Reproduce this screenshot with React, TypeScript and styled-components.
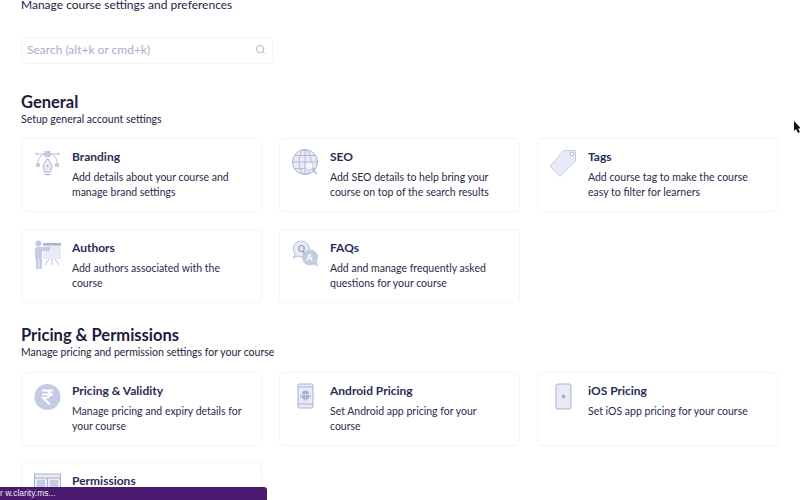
import React from 'react';
import styled, { createGlobalStyle } from 'styled-components';

const Global = createGlobalStyle`
  html, body {
    margin: 0;
    height: 500px;
    overflow: hidden;
    background: #fff;
    font-family: "Lato", "Liberation Sans", sans-serif;
    color: #20203f;
  }
`;

const Page = styled.div`
  width: 800px;
  height: 500px;
  box-sizing: border-box;
  padding: 0 22px 0 21px;
  overflow: hidden;
`;

const Subtitle = styled.p`
  margin: 0;
  height: 10px;
  line-height: 10px;
  font-size: 12px;
  color: #23233f;
`;

const SearchBox = styled.div`
  width: 252px;
  height: 27px;
  box-sizing: border-box;
  margin-top: 27px;
  padding: 0 6px 2px 5px;
  display: flex;
  align-items: center;
  justify-content: space-between;
  border: 1px solid #f4f5f9;
  border-radius: 4px;
  font-size: 12px;
  color: #a9aeca;
`;

const SectionTitle = styled.h2<{ $first?: boolean }>`
  margin: ${(p) => (p.$first ? '28px' : '22px')} 0 0;
  font-size: 16.5px;
  line-height: 20px;
  font-weight: 700;
  color: #1b1b3a;
`;

const SectionText = styled.p<{ $roomy?: boolean }>`
  margin: 0 0 ${(p) => (p.$roomy ? '13px' : '12px')};
  padding-top: 1px;
  font-size: 10.5px;
  line-height: 13px;
  color: #23233f;
`;

const Grid = styled.div`
  display: grid;
  grid-template-columns: repeat(3, 241px);
  grid-auto-rows: 74px;
  column-gap: 17px;
  row-gap: 16.5px;
`;

const Card = styled.div`
  box-sizing: border-box;
  padding: 10px 14px 0 12px;
  display: flex;
  gap: 11px;
  border: 1px solid #f4f5f9;
  border-radius: 4px;
  background: #fff;
`;

const IconSlot = styled.div`
  width: 27px;
  flex: none;
`;

const CardBody = styled.div`
  min-width: 0;
`;

const CardTitle = styled.h3`
  margin: 0 0 5px;
  font-size: 12px;
  line-height: 16px;
  font-weight: 700;
  color: #2a2c55;
`;

const CardText = styled.p`
  margin: 0;
  font-size: 10.5px;
  line-height: 15px;
  color: #2b2b48;
`;

const StatusBar = styled.div`
  position: fixed;
  left: 0;
  bottom: 0;
  width: 267px;
  height: 13px;
  background: #4a1a6e;
  border-top-right-radius: 3px;
  color: #efeaf4;
  font-family: "Liberation Sans", sans-serif;
  font-size: 8.5px;
  line-height: 13px;
  white-space: nowrap;
`;

const Cursor = styled.svg`
  position: fixed;
  left: 793px;
  top: 121px;
`;

const tone = '#c5cbe2';
const line = '#a9b1d2';
const pale = '#e8eaf5';

const Svg = styled.svg`
  display: block;
`;

const BrandingIcon = () => (
  <Svg width="27" height="28" viewBox="0 0 27 28" fill="none">
    <path d="M3 5H24" stroke={line} strokeWidth="0.8" />
    <path d="M4 14C4 9 7 6 11 5M23 14C23 9 20 6 16 5" stroke={line} strokeWidth="0.8" />
    <rect x="11" y="2.5" width="5" height="5" fill={tone} stroke={line} strokeWidth="0.6" />
    <circle cx="2.5" cy="5" r="1.2" fill={tone} />
    <circle cx="24.5" cy="5" r="1.2" fill={tone} />
    <rect x="2" y="14" width="4" height="4" rx="1" fill={tone} />
    <rect x="21" y="14" width="4" height="4" rx="1" fill={tone} />
    <path d="M13.5 9L18 17L16.5 23H10.5L9 17Z" fill={pale} stroke={line} strokeWidth="0.9" />
    <circle cx="13.5" cy="17" r="1" fill={line} />
    <path d="M10.5 25.5H16.5" stroke={line} strokeWidth="1.2" />
  </Svg>
);

const AuthorsIcon = () => (
  <Svg width="27" height="30" viewBox="0 0 27 30" fill="none">
    <rect x="9" y="5" width="18" height="14" fill={pale} />
    <rect x="9" y="3" width="18" height="2.5" fill={line} />
    <path d="M15 19L11 25M18 19V25M21 19L25 25" stroke={line} strokeWidth="0.8" />
    <circle cx="4.5" cy="3.5" r="3" fill={tone} />
    <path d="M1 9a2 2 0 0 1 2-2H16V11H8V29H2V19H1Z" fill={tone} />
    <path d="M5 29V19" stroke="#fff" strokeWidth="0.6" />
  </Svg>
);

const SeoIcon = () => (
  <Svg width="27" height="28" viewBox="0 0 27 28" fill="none">
    <circle cx="13" cy="13" r="12.5" fill={pale} stroke={line} />
    <ellipse cx="13" cy="13" rx="6" ry="12.5" stroke={line} strokeWidth="0.8" />
    <path d="M13 .5V25.5M.5 13H25.5M2.5 6.5H23.5M2.5 19.5H23.5" stroke={line} strokeWidth="0.8" />
    <circle cx="17" cy="17" r="4" fill="#f6f7fb" stroke={tone} />
    <path d="M20 20L25 25" stroke={line} strokeWidth="1.4" />
  </Svg>
);

const FaqIcon = () => (
  <Svg width="27" height="28" viewBox="0 0 27 28" fill="none">
    <path d="M9.5 1a8 8 0 1 1-4 15L1 18l2-4A8 8 0 0 1 9.5 1Z" fill={pale} stroke={line} strokeWidth="0.8" />
    <path d="M17.5 9.5a8 8 0 1 0 4 15.2L26 26l-1.2-4.5A8 8 0 0 0 17.5 9.5Z" fill={tone} />
    <text x="9.5" y="12" textAnchor="middle" fontSize="9" fontWeight="700" fill="#9aa2c6" fontFamily="Lato, sans-serif">Q</text>
    <text x="17.5" y="21" textAnchor="middle" fontSize="9" fontWeight="700" fill="#fff" fontFamily="Lato, sans-serif">A</text>
  </Svg>
);

const TagIcon = () => (
  <Svg width="27" height="28" viewBox="0 0 27 28" fill="none">
    <path d="M14 1.5H25.5V12L11 26.5Q10 27.5 9 26.5L1 18Q0 17 1 16Z" fill={pale} stroke={tone} strokeWidth="1" />
    <circle cx="22" cy="5" r="1.8" fill="#fff" stroke={line} strokeWidth="0.8" />
  </Svg>
);

const RupeeIcon = () => (
  <Svg width="27" height="28" viewBox="0 0 27 28" fill="none">
    <circle cx="13.5" cy="14" r="13" fill={tone} />
    <path d="M8 7.5H19M8 11.5H19M10 7.5C15.5 7.5 16.5 10 16 12C15.5 14.5 12.5 15 9 15L16 21.5" stroke="#fff" strokeWidth="1.9" fill="none" />
  </Svg>
);

const AndroidIcon = () => (
  <Svg width="27" height="28" viewBox="0 0 27 28" fill="none">
    <rect x="6" y="1" width="15" height="24" rx="1.5" fill={pale} stroke={line} />
    <path d="M6 4H21M6 21H21" stroke={line} />
    <path d="M10 11a3.5 3.5 0 0 1 7 0ZM10 11.7H17V15.5H15.5V17.5H14V15.5H13V17.5H11.5V15.5H10Z" fill={line} />
    <path d="M8.8 11.7V14.8M18.2 11.7V14.8" stroke={line} />
  </Svg>
);

const AppleIcon = () => (
  <Svg width="27" height="28" viewBox="0 0 27 28" fill="none">
    <rect x="6" y="1" width="15" height="25" rx="2" fill={pale} stroke={line} />
    <circle cx="13.5" cy="13.5" r="2" fill={line} />
  </Svg>
);

const PermissionsIcon = () => (
  <Svg width="27" height="28" viewBox="0 0 27 28" fill="none">
    <rect x=".5" y="1" width="26" height="26" fill={pale} stroke={line} />
    <path d="M1 5H26M13.5 5V27" stroke={line} />
    <rect x="3" y="7" width="8" height="8" fill={tone} />
    <rect x="16" y="7" width="8" height="8" fill={tone} />
  </Svg>
);

type Item = { title: string; text?: string; icon: React.ReactNode };

const general: Item[] = [
  { title: 'Branding', text: 'Add details about your course and manage brand settings', icon: <BrandingIcon /> },
  { title: 'SEO', text: 'Add SEO details to help bring your course on top of the search results', icon: <SeoIcon /> },
  { title: 'Tags', text: 'Add course tag to make the course easy to filter for learners', icon: <TagIcon /> },
  { title: 'Authors', text: 'Add authors associated with the course', icon: <AuthorsIcon /> },
  { title: 'FAQs', text: 'Add and manage frequently asked questions for your course', icon: <FaqIcon /> },
];

const pricing: Item[] = [
  { title: 'Pricing & Validity', text: 'Manage pricing and expiry details for your course', icon: <RupeeIcon /> },
  { title: 'Android Pricing', text: 'Set Android app pricing for your course', icon: <AndroidIcon /> },
  { title: 'iOS Pricing', text: 'Set iOS app pricing for your course', icon: <AppleIcon /> },
  { title: 'Permissions', icon: <PermissionsIcon /> },
];

const Cards = ({ items }: { items: Item[] }) => (
  <Grid>
    {items.map((item) => (
      <Card key={item.title}>
        <IconSlot>{item.icon}</IconSlot>
        <CardBody>
          <CardTitle>{item.title}</CardTitle>
          {item.text && <CardText>{item.text}</CardText>}
        </CardBody>
      </Card>
    ))}
  </Grid>
);

export default function App() {
  return (
    <>
      <Global />
      <Page>
        <Subtitle>Manage course settings and preferences</Subtitle>
        <SearchBox>
          Search (alt+k or cmd+k)
          <svg width="11" height="11" viewBox="0 0 24 24" fill="none" stroke="#a9aeca" strokeWidth="2">
            <circle cx="11" cy="11" r="8" />
            <path d="M21 21l-4-4" />
          </svg>
        </SearchBox>
        <SectionTitle $first>General</SectionTitle>
        <SectionText>Setup general account settings</SectionText>
        <Cards items={general} />
        <SectionTitle>Pricing &amp; Permissions</SectionTitle>
        <SectionText $roomy>Manage pricing and permission settings for your course</SectionText>
        <Cards items={pricing} />
      </Page>
      <StatusBar>r w.clarity.ms...</StatusBar>
      <Cursor width="8" height="13" viewBox="0 0 8 13">
        <path d="M1 0V10L3 8L5 12L7 11L5 7.5H8Z" fill="#111" />
      </Cursor>
    </>
  );
}
